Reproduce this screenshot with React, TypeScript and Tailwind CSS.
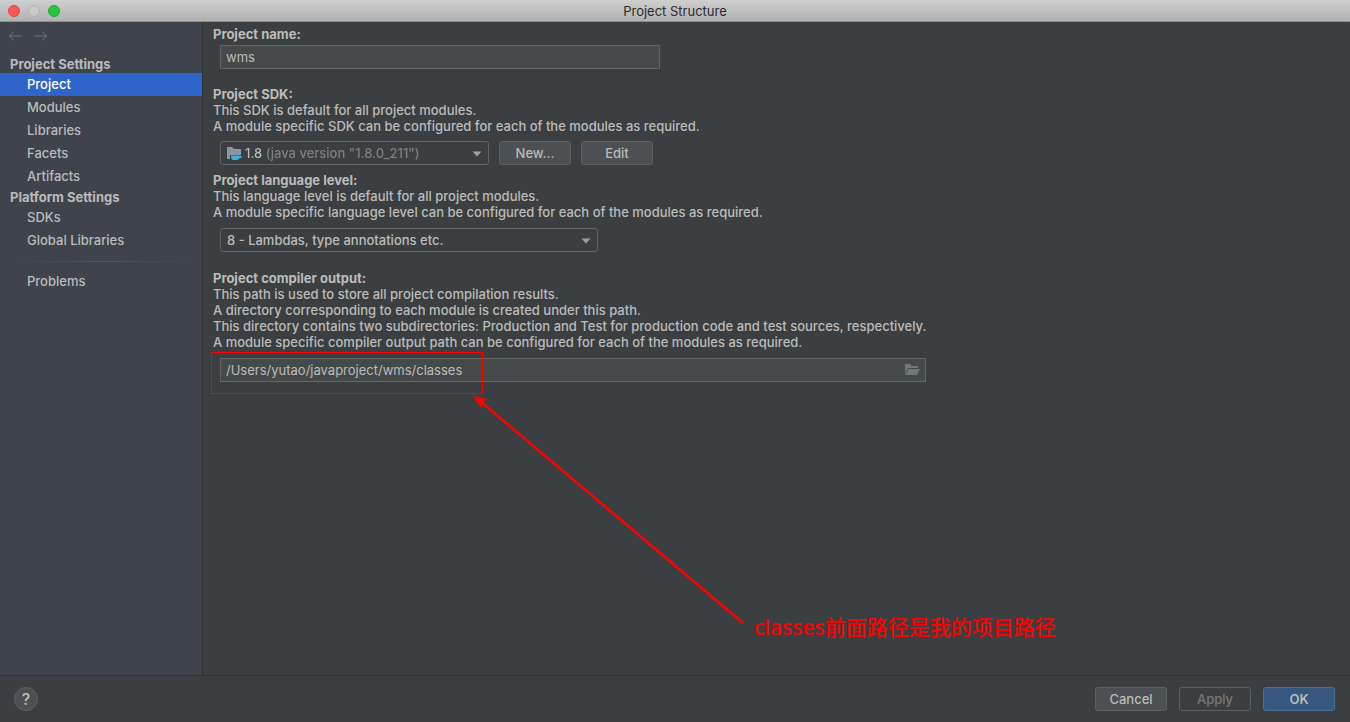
import React from "react";

const projectItems = ["Project", "Modules", "Libraries", "Facets", "Artifacts"];
const platformItems = ["SDKs", "Global Libraries"];

interface NavItemProps {
  label: string;
  active?: boolean;
}

const NavItem: React.FC<NavItemProps> = ({ label, active }) => {
  return (
    <li>
      <a
        href="#"
        aria-current={active ? "page" : undefined}
        className={`block h-[23px] pl-[27px] leading-[23px] ${
          active ? "bg-[#2f65ca] text-white" : ""
        }`}
      >
        {label}
      </a>
    </li>
  );
};

const NavHeading: React.FC<{ children: React.ReactNode }> = ({ children }) => (
  <h2 className="h-[18px] pl-[10px] font-bold leading-[18px]">{children}</h2>
);

interface DialogButtonProps {
  label: string;
  variant?: "default" | "primary" | "disabled";
}

const DialogButton: React.FC<DialogButtonProps> = ({
  label,
  variant = "default",
}) => {
  const styles = {
    default: "border-[#5e6060] bg-[#4c5052]",
    primary: "border-[#4c708c] bg-[#365880] font-semibold",
    disabled: "border-[#5e6060] text-[#777777]",
  };

  return (
    <button
      type="button"
      disabled={variant === "disabled"}
      className={`h-6 w-[72px] rounded-[3px] border ${styles[variant]}`}
    >
      {label}
    </button>
  );
};

const Caret = () => (
  <svg
    width="10"
    height="6"
    viewBox="0 0 10 6"
    className="pointer-events-none absolute right-[6px] top-[9px]"
    fill="#9da0a2"
  >
    <path d="M0.5 0.5h9L5 5.5z" />
  </svg>
);

const SdkIcon = () => (
  <svg width="16" height="16" viewBox="0 0 16 16" className="shrink-0">
    <path d="M1 2h5l2 2h7v6H4v4H1z" fill="#8b979f" />
    <path
      d="M5 10.500h8.500v.5H16c0 1.500-1 2.300-2.800 2.300-.6.900-1.200 1.700-2.200 1.700H7.500C6 15 5 13.500 5 10.500z"
      fill="#3fb1e0"
    />
  </svg>
);

const FolderIcon = () => (
  <svg width="16" height="14" viewBox="0 0 16 14" fill="#6c7880">
    <path d="M1 1h5l1.500 2H14v2H4L1 11.500z" />
    <path d="M4.500 6H16l-3 6H1.500z" />
  </svg>
);

const NavArrow: React.FC<{ label: string; d: string }> = ({ label, d }) => (
  <button type="button" aria-label={label} disabled>
    <svg
      width="14"
      height="10"
      viewBox="0 0 14 10"
      fill="none"
      stroke="#5f6163"
      strokeWidth="1.5"
    >
      <path d={d} />
    </svg>
  </button>
);

// Red box, arrow and note drawn over the output path
const Annotation = () => (
  <div className="pointer-events-none absolute -left-[2px] -top-[6px] z-10">
    <div className="h-[42px] w-[272px] border border-[#ff0000]" />
    <svg
      width="280"
      height="240"
      viewBox="0 0 280 240"
      className="absolute left-[260px] top-[40px]"
    >
      <path d="M272 231L9 9" stroke="#ff0000" strokeWidth="2.500" />
      <path d="M2 4l14 3-4 4-2 5z" fill="#ff0000" />
    </svg>
    <p className="absolute left-[543px] top-[261px] whitespace-nowrap font-['Noto_Sans','Noto_Sans_CJK_SC',sans-serif] text-[21px] leading-7 text-[#ff0000]">
      classes前面路径是我的项目路径
    </p>
  </div>
);

const TitleBar = () => (
  <header className="relative flex h-[22px] shrink-0 items-center justify-center border-b border-[#8e8e8e] bg-linear-to-b from-[#cfcfcf] to-[#b2b2b2] text-[#2c2c2c]">
    <div className="absolute left-2 top-[5px] flex gap-2">
      <button
        type="button"
        aria-label="Close"
        className="size-3 rounded-full border border-[#e2443f] bg-[#fc5753]"
      />
      <button
        type="button"
        aria-label="Minimize"
        className="size-3 rounded-full border border-[#b0b0b0] bg-[#cacaca]"
      />
      <button
        type="button"
        aria-label="Zoom"
        className="size-3 rounded-full border border-[#1fa930] bg-[#28c43b]"
      />
    </div>
    <h1 className="font-normal">Project Structure</h1>
  </header>
);

export default function App() {
  return (
    <div className="flex h-screen flex-col bg-[#3c3f41] font-['Inter',sans-serif] text-[13px] font-medium leading-4 text-[#bbbbbb]">
      <TitleBar />

      <div className="flex min-h-0 flex-1">
        <nav className="w-[203px] shrink-0 border-r border-[#323232] bg-[#3e434c]">
          <div className="flex h-[33px] items-start gap-3 pl-2 pt-[9px]">
            <NavArrow label="Back" d="M14 5H1.500M5.500 1l-4 4 4 4" />
            <NavArrow label="Forward" d="M0 5h12.500M8.500 1l4 4-4 4" />
          </div>
          <NavHeading>Project Settings</NavHeading>
          <ul>
            {projectItems.map((item) => (
              <NavItem key={item} label={item} active={item === "Project"} />
            ))}
          </ul>
          <NavHeading>Platform Settings</NavHeading>
          <ul>
            {platformItems.map((item) => (
              <NavItem key={item} label={item} />
            ))}
          </ul>
          <div className="mx-2 mb-2 mt-[9px] h-px bg-linear-to-r from-transparent via-[#555555] to-transparent" />
          <ul>
            <NavItem label="Problems" />
          </ul>
        </nav>

        <main className="min-w-0 flex-1 pl-[10px] pt-1">
          <section>
            <label htmlFor="name" className="block font-bold">
              Project name:
            </label>
            <input
              id="name"
              defaultValue="wms"
              className="ml-[7px] mt-[3px] block h-6 w-[440px] border border-[#646464] bg-[#45494a] px-[5px] font-normal outline-none"
            />
          </section>

          <section className="mt-[17px]">
            <label htmlFor="sdk" className="block font-bold">
              Project SDK:
            </label>
            <p>This SDK is default for all project modules.</p>
            <p>
              A module specific SDK can be configured for each of the modules
              as required.
            </p>
            <div className="ml-[7px] mt-[7px] flex gap-[10px]">
              <div className="relative flex h-6 w-[269px] items-center rounded-[3px] border border-[#646464] pl-[5px]">
                <SdkIcon />
                {/* version number is brighter than the rest of the name */}
                <select
                  id="sdk"
                  className="h-full min-w-0 flex-1 appearance-none bg-linear-to-r from-[#bbbbbb] from-[22px] to-[#808080] to-[22px] bg-clip-text pl-[3px] text-transparent outline-none"
                >
                  <option>1.8 (java version "1.8.0_211")</option>
                </select>
                <Caret />
              </div>
              <DialogButton label="New..." />
              <DialogButton label="Edit" />
            </div>
          </section>

          <section className="mt-[7px]">
            <label htmlFor="level" className="block font-bold">
              Project language level:
            </label>
            <p>This language level is default for all project modules.</p>
            <p>
              A module specific language level can be configured for each of
              the modules as required.
            </p>
            <div className="relative ml-[7px] mt-2 h-6 w-[378px] rounded-[3px] border border-[#646464]">
              <select
                id="level"
                className="block h-full w-full appearance-none bg-transparent pl-[6px] outline-none"
              >
                <option>8 - Lambdas, type annotations etc.</option>
              </select>
              <Caret />
            </div>
          </section>

          <section className="mt-[18px]">
            <label htmlFor="output" className="block font-bold">
              Project compiler output:
            </label>
            <p>This path is used to store all project compilation results.</p>
            <p>
              A directory corresponding to each module is created under this
              path.
            </p>
            <p>
              This directory contains two subdirectories: Production and Test
              for production code and test sources, respectively.
            </p>
            <p>
              A module specific compiler output path can be configured for each
              of the modules as required.
            </p>
            <div className="relative mt-2">
              <div className="ml-[7px] flex h-6 w-[706px] items-center border border-[#646464] bg-[#45494a] pr-[5px]">
                <input
                  id="output"
                  defaultValue="/Users/yutao/javaproject/wms/classes"
                  className="h-full min-w-0 flex-1 bg-transparent px-[5px] font-normal outline-none"
                />
                <button type="button" aria-label="Browse">
                  <FolderIcon />
                </button>
              </div>
              <Annotation />
            </div>
          </section>
        </main>
      </div>

      <footer className="flex h-[47px] shrink-0 items-center gap-3 border-t border-[#323232] pl-[14px] pr-[15px]">
        <button
          type="button"
          aria-label="Help"
          className="mr-auto size-6 rounded-full border border-[#5e6060] bg-[#4c5052] text-base font-medium leading-none"
        >
          ?
        </button>
        <DialogButton label="Cancel" />
        <DialogButton label="Apply" variant="disabled" />
        <DialogButton label="OK" variant="primary" />
      </footer>
    </div>
  );
}
